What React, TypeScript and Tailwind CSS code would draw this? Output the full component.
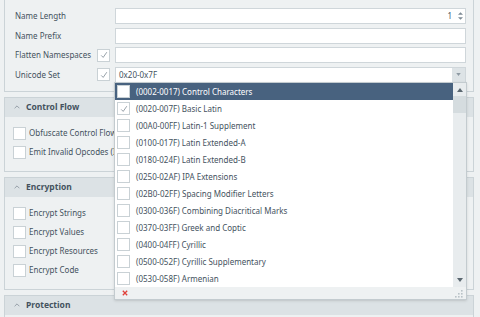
import React from "react";

const font = { fontFamily: '"Noto Sans", "Liberation Sans", sans-serif' };

function Check({ checked, className = "" }: { checked?: boolean; className?: string }) {
  return (
    <div
      className={
        "flex h-[13px] w-[13px] shrink-0 items-center justify-center border border-[#c9d1d5] bg-white " + className
      }
    >
      {checked && (
        <svg viewBox="0 0 10 10" className="h-[8px] w-[8px]">
          <path d="M1.5 5.5 L4 8 L8.5 1.5" fill="none" stroke="#7d8a94" strokeWidth="1" />
        </svg>
      )}
    </div>
  );
}

function Chevron() {
  return (
    <svg viewBox="0 0 8 5" className="h-[4px] w-[6px]">
      <path d="M0.8 4.2 L4 1 L7.2 4.2" fill="none" stroke="#8e9aa3" strokeWidth="1.2" />
    </svg>
  );
}

function Row({ label, check, children }: { label: string; check?: boolean; children: React.ReactNode }) {
  return (
    <div className="flex h-[16px] items-center">
      <div className="w-[82px] shrink-0 text-[8px] text-[#44525e]">{label}</div>
      <div className="w-[13px] shrink-0">{check !== undefined && <Check checked={check} />}</div>
      <div className="ml-[5px] flex h-full flex-1 items-center">{children}</div>
    </div>
  );
}

function Panel({ title, items }: { title: string; items?: string[] }) {
  return (
    <div className="border border-[#cbd3d7] bg-[#eef1f2]">
      <div className="flex h-[19px] items-center gap-[6px] bg-[#dce2e5] pl-[9px]">
        <Chevron />
        <span className="text-[8.5px] font-bold text-[#44525e]">{title}</span>
      </div>
      {items ? (
        <div className="flex flex-col pb-[9px] pl-[8px] pt-[7px]">
          {items.map((t) => (
            <div key={t} className="flex h-[19px] items-center gap-[3px]">
              <Check />
              <span className="whitespace-nowrap text-[8px] text-[#44525e]">{t}</span>
            </div>
          ))}
        </div>
      ) : (
        <div className="h-[20px]" />
      )}
    </div>
  );
}

const ranges: [string, boolean][] = [
  ["(0002-0017) Control Characters", false],
  ["(0020-007F) Basic Latin", true],
  ["(00A0-00FF) Latin-1 Supplement", false],
  ["(0100-017F) Latin Extended-A", false],
  ["(0180-024F) Latin Extended-B", false],
  ["(0250-02AF) IPA Extensions", false],
  ["(02B0-02FF) Spacing Modifier Letters", false],
  ["(0300-036F) Combining Diacritical Marks", false],
  ["(0370-03FF) Greek and Coptic", false],
  ["(0400-04FF) Cyrillic", false],
  ["(0500-052F) Cyrillic Supplementary", false],
  ["(0530-058F) Armenian", false],
];

function Dropdown() {
  return (
    <div className="absolute left-[114px] top-[82px] flex h-[218px] w-[353px] flex-col border border-[#c3cbcf] bg-[#eef1f2] shadow-sm">
      <div className="flex flex-1">
        <div className="flex flex-1 flex-col bg-white">
          {ranges.map(([t, c], i) => (
            <div
              key={t}
              className={
                "flex h-[17px] items-center gap-[6px] pl-[2px] " + (i === 0 ? "bg-[#48627f] text-white" : "text-[#44525e]")
              }
            >
              <Check checked={c} />
              <span className="whitespace-nowrap text-[8px]">{t}</span>
            </div>
          ))}
        </div>
        <div className="flex w-[13px] flex-col items-center bg-[#e8ecee]">
          <div className="flex h-[13px] items-center justify-center">
            <svg viewBox="0 0 6 4" className="h-[4px] w-[6px]">
              <path d="M0 4 L3 0 L6 4 Z" fill="#5b6770" />
            </svg>
          </div>
          <div className="h-[17px] w-full bg-[#d5dcdf]" />
          <div className="flex-1" />
          <div className="flex h-[14px] items-center justify-center">
            <svg viewBox="0 0 6 4" className="h-[4px] w-[6px]">
              <path d="M0 0 L6 0 L3 4 Z" fill="#5b6770" />
            </svg>
          </div>
        </div>
      </div>
      <div className="flex h-[14px] items-center justify-between pl-[7px] pr-[3px]">
        <svg viewBox="0 0 6 6" className="h-[6px] w-[6px]">
          <path d="M0.8 0.8 L5.2 5.2 M5.2 0.8 L0.8 5.2" stroke="#e0403a" strokeWidth="1.3" />
        </svg>
        <svg viewBox="0 0 8 8" className="mb-[1px] h-[8px] w-[8px] self-end">
          {[
            [6, 0],
            [6, 3],
            [3, 3],
            [6, 6],
            [3, 6],
            [0, 6],
          ].map(([x, y]) => (
            <rect key={x + "-" + y} x={x} y={y} width="1.6" height="1.6" fill="#b9c2c7" />
          ))}
        </svg>
      </div>
    </div>
  );
}

export default function App() {
  return (
    <div className="relative h-[317px] w-[480px] overflow-hidden bg-[#eef1f2]" style={font}>
      <div className="flex flex-col gap-[5px] pl-[4px] pr-[6px]">
        <div className="flex flex-col gap-[3.5px] border border-t-0 border-[#cbd3d7] pb-[8px] pl-[10px] pr-[7px] pt-[8px]">
          <Row label="Name Length">
            <div className="flex h-full flex-1 items-center justify-end border border-[#cfd6da] bg-white pr-[2px]">
              <span className="text-[8px] text-[#44525e]">1</span>
              <div className="ml-[6px] flex flex-col gap-[2px]">
                <svg viewBox="0 0 6 3" className="h-[3px] w-[5px]">
                  <path d="M0 3 L3 0 L6 3 Z" fill="#7d8a94" />
                </svg>
                <svg viewBox="0 0 6 3" className="h-[3px] w-[5px]">
                  <path d="M0 0 L6 0 L3 3 Z" fill="#7d8a94" />
                </svg>
              </div>
            </div>
          </Row>
          <Row label="Name Prefix">
            <div className="h-full flex-1 border border-[#cfd6da] bg-white" />
          </Row>
          <Row label="Flatten Namespaces" check>
            <div className="h-full flex-1 border border-[#cfd6da] bg-white" />
          </Row>
          <Row label="Unicode Set" check>
            <div className="flex h-full flex-1 border border-[#cfd6da] bg-white">
              <div className="flex flex-1 items-center pl-[3px] text-[8px] text-[#44525e]">0x20-0x7F</div>
              <div className="flex w-[13px] items-center justify-center bg-[#dde3e6]">
                <svg viewBox="0 0 6 4" className="h-[3px] w-[5px]">
                  <path d="M0 0 L6 0 L3 4 Z" fill="#8e9aa3" />
                </svg>
              </div>
            </div>
          </Row>
        </div>
        <Panel title="Control Flow" items={["Obfuscate Control Flow", "Emit Invalid Opcodes (ILDASM Break)"]} />
        <Panel title="Encryption" items={["Encrypt Strings", "Encrypt Values", "Encrypt Resources", "Encrypt Code"]} />
        <Panel title="Protection" />
      </div>
      <Dropdown />
    </div>
  );
}
